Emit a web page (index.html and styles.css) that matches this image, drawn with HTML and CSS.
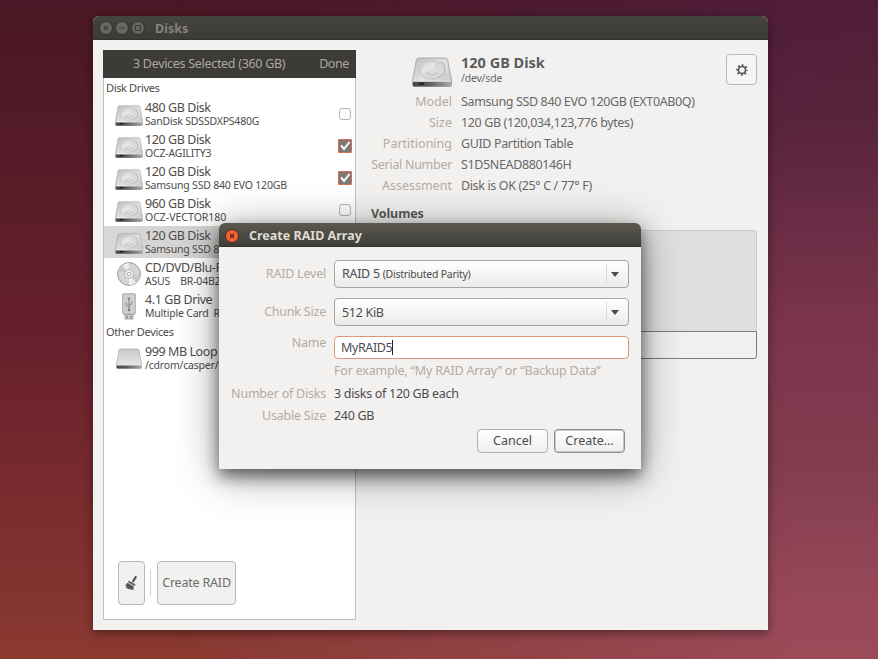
FILE: index.html
```html
<!DOCTYPE html>
<html lang="en">
<head>
    <meta charset="UTF-8">
    <meta name="viewport" content="width=device-width, initial-scale=1.0">
    <title>Disks</title>
    <link rel="stylesheet" href="styles.css">
</head>
<body>
    <svg class="defs" width="0" height="0">
        <defs>
            <linearGradient id="top" x1="0" y1="0" x2="1" y2="1">
                <stop offset="0" stop-color="#bdbdbd"/>
                <stop offset="0.5" stop-color="#e2e2e2"/>
                <stop offset="1" stop-color="#c2c2c2"/>
            </linearGradient>
            <linearGradient id="front" x1="0" y1="0" x2="1" y2="0">
                <stop offset="0" stop-color="#484848"/>
                <stop offset="0.4" stop-color="#595959"/>
                <stop offset="1" stop-color="#a9a9a9"/>
            </linearGradient>
            <linearGradient id="metal" x1="0" y1="0" x2="0" y2="1">
                <stop offset="0" stop-color="#c9c9c9"/>
                <stop offset="1" stop-color="#ededed"/>
            </linearGradient>
        </defs>
        <symbol id="hdd" viewBox="0 0 40 30">
            <path d="M6.500 1h27q1.500 0 2 1.500L39.500 23v5q0 1.500-1.500 1.500H2Q.5 29.500.5 28v-5L4.500 2.500Q5 1 6.500 1z" fill="url(#top)" stroke="#959595" stroke-width=".7"/>
            <path d="M1 24.500h38V28q0 1.500-1.500 1.500h-35Q1 29.500 1 28z" fill="url(#front)"/>
            <path d="M1 24.200h38" stroke="#f2f2f2" stroke-width=".8"/>
            <ellipse cx="20" cy="13" rx="12.500" ry="9" fill="#d9d9d9" stroke="#bcbcbc" stroke-width=".7"/>
            <path d="M9 17Q11 6 24 5L20 13z" fill="#efefef" opacity=".5"/>
            <ellipse cx="20" cy="14.500" rx="5" ry="3" fill="#dadada" stroke="#eee" stroke-width=".7"/>
            <path d="M14.500 14.500q1 3.500 5.500 3.500t5.500-3.500M29 5l3 2 1 10-7 3" fill="none" stroke="#adadad" stroke-width=".8"/>
            <path d="M7 25.800h5v2H7z" fill="#1c1c1c"/>
        </symbol>
        <symbol id="loop" viewBox="0 0 26 22">
            <path d="M4.500 1h17q1.200 0 1.500 1.200L25.500 17v2.500q0 1-1 1h-23q-1 0-1-1V17L3 2.200Q3.300 1 4.500 1z" fill="url(#metal)" stroke="#a8a8a8" stroke-width=".7"/>
            <path d="M.7 17.500h24.600v2q0 1-1 1H1.700q-1 0-1-1z" fill="url(#front)"/>
        </symbol>
        <symbol id="disc" viewBox="0 0 24 24">
            <circle cx="12" cy="12" r="11.400" fill="#d5d5d5" stroke="#8e8e8e" stroke-width=".9"/>
            <path d="M12 12L5 3.500Q8.500.8 12 1zM12 12l7 8.500q-3.500 2.700-7 2.500z" fill="#efefef"/>
            <path d="M12 12L1 9q1-3.500 4-6zM12 12l11 3q-1 3.500-4 6z" fill="#c8c8c8"/>
            <circle cx="12" cy="12" r="4.500" fill="#e9e9e9" stroke="#b3b3b3" stroke-width=".8"/>
            <circle cx="12" cy="12" r="1.700" fill="#fff" stroke="#999" stroke-width=".8"/>
        </symbol>
        <symbol id="usb" viewBox="0 0 14 27">
            <path d="M1.500.7h11q.8 0 .8.800v18.500q0 1.300-1.300 1.300H2Q.7 21.300.7 20V1.500Q.7.700 1.500.700z" fill="#cfcfcf" stroke="#989898" stroke-width=".8"/>
            <path d="M3 21.500h8v4.500H3z" fill="#cdcdcd" stroke="#8e8e8e" stroke-width=".8"/>
            <path d="M4.500 23.200h1.500v1.500H4.500zM8 23.200h1.500v1.500H8z" fill="#777"/>
            <path d="M7 5.500v11M7 14l-2.800-2V9.500M7 12.500l2.800-1.800V8.500" fill="none" stroke="#818181" stroke-width="1"/>
            <path d="M5.600 6.500L7 4l1.400 2.500z" fill="#777"/>
            <circle cx="7" cy="17" r="1.300" fill="#777"/>
        </symbol>
    </svg>

    <div class="window">
        <div class="titlebar">
            <svg class="buttons" width="46" height="14" viewBox="0 0 46 14">
                <g fill="#6a6862" stroke="#33322e">
                    <circle cx="7" cy="7" r="6.400"/>
                    <circle cx="23" cy="7" r="6.400"/>
                    <circle cx="39" cy="7" r="6.400"/>
                </g>
                <path d="M5 5l4 4M9 5l-4 4M20 7h6M36.500 4.500h5v5h-5z" fill="none" stroke="#3b3a36" stroke-width="1.200"/>
            </svg>
            <span class="title">Disks</span>
        </div>
        <div class="content">
            <div class="sidebar">
                <div class="selection">
                    <span class="count">3 Devices Selected (360 GB)</span>
                    <span class="done">Done</span>
                </div>
                <div class="list">
                    <div class="group">Disk Drives</div>
                    <div class="row">
                        <svg class="icon"><use href="#hdd"/></svg>
                        <div class="text"><b>480 GB Disk</b><small>SanDisk SDSSDXPS480G</small></div>
                        <span class="check"></span>
                    </div>
                    <div class="row">
                        <svg class="icon"><use href="#hdd"/></svg>
                        <div class="text"><b>120 GB Disk</b><small>OCZ-AGILITY3</small></div>
                        <span class="check checked"><svg width="12" height="12" viewBox="0 0 12 12"><path d="M2 5.500l3 3.500 5.500-7"/></svg></span>
                    </div>
                    <div class="row">
                        <svg class="icon"><use href="#hdd"/></svg>
                        <div class="text"><b>120 GB Disk</b><small>Samsung SSD 840 EVO 120GB</small></div>
                        <span class="check checked"><svg width="12" height="12" viewBox="0 0 12 12"><path d="M2 5.500l3 3.500 5.500-7"/></svg></span>
                    </div>
                    <div class="row">
                        <svg class="icon"><use href="#hdd"/></svg>
                        <div class="text"><b>960 GB Disk</b><small class="wide">OCZ-VECTOR180</small></div>
                        <span class="check"></span>
                    </div>
                    <div class="row current">
                        <svg class="icon"><use href="#hdd"/></svg>
                        <div class="text"><b>120 GB Disk</b><small>Samsung SSD 840 EVO 120GB</small></div>
                    </div>
                    <div class="row">
                        <svg class="icon disc"><use href="#disc"/></svg>
                        <div class="text"><b>CD/DVD/Blu-R</b><small>ASUS &nbsp;&nbsp; BR-04B2</small></div>
                    </div>
                    <div class="row">
                        <svg class="icon usb"><use href="#usb"/></svg>
                        <div class="text"><b>4.1 GB Drive</b><small>Multiple Card &nbsp;R</small></div>
                    </div>
                    <div class="group">Other Devices</div>
                    <div class="row">
                        <svg class="icon loop"><use href="#loop"/></svg>
                        <div class="text"><b>999 MB Loop</b><small>/cdrom/casper/f</small></div>
                    </div>
                </div>
                <div class="toolbar">
                    <div class="tool brush">
                        <svg width="13" height="16" viewBox="0 0 13 16" fill="#555">
                            <path d="M10.200.8l1.900.9-3.400 5.800-1.900-1z"/>
                            <path d="M3.800 5.800l6.700 3.700-.9 1.500L3 7.300z"/>
                            <path d="M2.300 7.800l6.600 3.700-.7 1.800 1.500 1.200-4 .2-1.500-1.200.3 1.100L.5 12.500l1.500-1-1.800-.8z"/>
                        </svg>
                    </div>
                    <div class="separator"></div>
                    <div class="tool create">Create RAID</div>
                </div>
            </div>

            <div class="details">
                <div class="header">
                    <svg class="big"><use href="#hdd"/></svg>
                    <div class="name"><h1>120 GB Disk</h1><p>/dev/sde</p></div>
                    <div class="gear">
                        <svg width="14" height="14" viewBox="0 0 14 14">
                            <circle cx="7" cy="7" r="3.500" fill="none" stroke="#555" stroke-width="1.600"/>
                            <circle cx="7" cy="7" r="4.900" fill="none" stroke="#555" stroke-width="1.800" stroke-dasharray="1.800 2.049" stroke-dashoffset=".9"/>
                        </svg>
                    </div>
                </div>
                <div class="info">
                    <span class="label">Model</span><span>Samsung SSD 840 EVO 120GB (EXT0AB0Q)</span>
                    <span class="label">Size</span><span>120 GB (120,034,123,776 bytes)</span>
                    <span class="label">Partitioning</span><span>GUID Partition Table</span>
                    <span class="label serial">Serial Number</span><span>S1D5NEAD880146H</span>
                    <span class="label">Assessment</span><span>Disk is OK (25° C / 77° F)</span>
                </div>
                <h2>Volumes</h2>
                <div class="volumes"><div class="volume"></div><div class="volume-bar"></div></div>
            </div>
        </div>
    </div>

    <div class="dialog">
        <div class="titlebar">
            <svg class="close" width="14" height="14" viewBox="0 0 14 14">
                <circle cx="7" cy="7" r="6.500" fill="#ef6238" stroke="#5b2b1b"/>
                <path d="M5 5l4 4M9 5l-4 4" stroke="#5a2412" stroke-width="1.200"/>
            </svg>
            <span class="title">Create RAID Array</span>
        </div>
        <div class="form">
            <span class="label">RAID Level</span>
            <div class="combo"><span>RAID 5 <small>(Distributed Parity)</small></span><i></i></div>
            <span class="label">Chunk Size</span>
            <div class="combo"><span>512 KiB</span><i></i></div>
            <span class="label name-label">Name</span>
            <div class="entry"><span>MyRAID5</span></div>
            <span></span>
            <span class="hint">For example, “My RAID Array” or “Backup Data”</span>
            <span class="label">Number of Disks</span>
            <span>3 disks of 120 GB each</span>
            <span class="label">Usable Size</span>
            <span>240 GB</span>
        </div>
        <div class="actions">
            <div class="btn">Cancel</div>
            <div class="btn default">Create…</div>
        </div>
    </div>
</body>
</html>
```
FILE: styles.css
```css
* {
    box-sizing: border-box;
}
body {
    margin: 0;
    width: 878px;
    height: 659px;
    position: relative;
    z-index: 0;
    overflow: hidden;
    font-family: 'Noto Sans', sans-serif;
    font-size: 12.5px;
    line-height: 16px;
    white-space: nowrap;
    color: #4c4c4c;
    background: linear-gradient(#491725, #65202c 50%, #7a2b2e 76%, #8a3a30);
}
/* wallpaper: the right side fades to purple */
body::before, body::after {
    content: '';
    position: absolute;
    inset: 0;
    z-index: -1;
}
body::before {
    background: linear-gradient(#4d1d36, #5a253b 20%, #6e2f47 38%, #7b354b 50%, #813c50 70%, #974858 91%, #9b4a58);
    -webkit-mask-image: linear-gradient(to right, transparent 20%, #000 90%);
    mask-image: linear-gradient(to right, transparent 20%, #000 90%);
}
body::after {
    background: linear-gradient(to right, rgba(88, 28, 84, 0) 70%, rgba(88, 28, 84, 0.16));
    clip-path: polygon(878px 0, 878px 33px, 740px 170px, 600px 0);
}
.defs {
    position: absolute;
}
h1, h2, p {
    margin: 0;
}
.window {
    position: absolute;
    left: 93px;
    top: 16px;
    width: 675px;
    height: 614px;
    display: flex;
    flex-direction: column;
    border-radius: 6px 6px 0 0;
    overflow: hidden;
    background: #f2f1f0;
    box-shadow: 0 3px 10px rgba(0, 0, 0, 0.4);
}
.titlebar {
    display: flex;
    align-items: center;
    height: 24px;
    flex: none;
    background: linear-gradient(#454440, #3c3b37);
    color: #85837d;
    border-bottom: 1px solid #33322e;
}
.title {
    font-weight: bold;
    font-size: 12.5px;
    padding-top: 2px;
}
.window .buttons {
    margin: 0 10px 0 6px;
}
.content {
    flex: 1;
    display: flex;
    padding: 10px;
}
.sidebar {
    width: 253px;
    display: flex;
    flex-direction: column;
    border: 1px solid #c3c0bc;
    border-top: none;
    background: #fff;
}
.selection {
    height: 28px;
    margin: 0 -1px;
    padding: 0 7px 0 30px;
    display: flex;
    align-items: center;
    justify-content: space-between;
    background: #3c3b37;
    color: #aca89f;
}
.count {
    letter-spacing: -0.3px;
}
.done {
    letter-spacing: -0.4px;
}
.list {
    flex: 1;
}
.group {
    height: 20px;
    padding-left: 2px;
    line-height: 20px;
    font-size: 11px;
    letter-spacing: -0.35px;
}
.row {
    height: 32px;
    display: flex;
    padding: 0 4px 0 12px;
}
.row.current {
    background: linear-gradient(to right, #d9d7d5, #cfcdcb);
}
.icon {
    width: 28px;
    height: 21px;
    margin: 7px 1px 0 -1px;
}
.icon.disc {
    width: 24px;
    height: 24px;
    margin: 4px 3px 0 1px;
}
.icon.usb {
    width: 14px;
    height: 27px;
    margin: 3px 8px 0 6px;
}
.icon.loop {
    width: 26px;
    height: 22px;
    margin: 6px 2px 0 0;
}
.text {
    flex: 1;
    margin-left: 1px;
    padding-top: 3px;
}
.text b, .text small {
    display: block;
    font-weight: normal;
}
.text b {
    line-height: 14px;
    letter-spacing: -0.42px;
}
.text small {
    font-size: 10.5px;
    line-height: 13px;
    letter-spacing: -0.2px;
}
.text small.wide {
    letter-spacing: 0;
}
.check {
    width: 12px;
    height: 12px;
    margin-top: 10px;
    border: 1px solid #b6b3b0;
    border-radius: 3px;
    background: #fdfdfd;
}
.check.checked {
    width: 14px;
    height: 14px;
    margin: 9px -1px 0 0;
    border: 1px solid #d4714f;
    border-radius: 1px;
    background: #7b7876;
}
.check svg {
    display: block;
}
.check path {
    fill: none;
    stroke: #fff;
    stroke-width: 2;
}
.toolbar {
    display: flex;
    align-items: center;
    padding: 0 0 14px 14px;
}
.tool {
    height: 44px;
    display: flex;
    align-items: center;
    justify-content: center;
    border: 1px solid #b9b6b3;
    border-radius: 4px;
    background: #f2f1f0;
    color: #6b6b6b;
}
.brush {
    width: 27px;
}
.create {
    width: 79px;
    letter-spacing: -0.2px;
}
.separator {
    width: 1px;
    height: 26px;
    margin: 0 6px 0 5px;
    background: #d5d2cf;
}
.details {
    flex: 1;
    padding-left: 15px;
    color: #686868;
}
.header {
    display: flex;
    height: 40px;
}
.big {
    width: 40px;
    height: 30px;
    margin: 7px 9px 0 41px;
}
.name {
    flex: 1;
}
.name h1 {
    margin-top: 4px;
    font-size: 14.5px;
    line-height: 17px;
    color: #5c5c5c;
}
.name p {
    font-size: 10.5px;
    line-height: 14px;
    letter-spacing: -0.2px;
}
.gear {
    width: 31px;
    height: 31px;
    margin: 4px 1px 0 0;
    display: flex;
    align-items: center;
    justify-content: center;
    border: 1px solid #b9b6b3;
    border-radius: 4px;
    background: #f6f5f4;
}
.info {
    display: grid;
    grid-template-columns: 81px 1fr;
    column-gap: 9px;
    grid-auto-rows: 21px;
    padding-top: 1px;
    line-height: 21px;
    letter-spacing: -0.37px;
}
.label {
    text-align: right;
    color: #b5aba1;
    letter-spacing: 0;
}
.label.serial {
    letter-spacing: -0.3px;
}
h2 {
    margin: 9px 0 7px;
    font-size: 12.5px;
    line-height: 18px;
    letter-spacing: -0.1px;
    color: #5c5c5c;
}
.volumes {
    width: 386px;
}
.volume {
    height: 101px;
    border: 1px solid #cdcbc9;
    border-bottom: none;
    border-radius: 3px 3px 0 0;
    background: #e1e0df;
}
.volume-bar {
    height: 28px;
    border: 1px solid #7c7b79;
    border-radius: 0 0 3px 3px;
}
.dialog {
    position: absolute;
    left: 219px;
    top: 223px;
    width: 422px;
    height: 246px;
    border-radius: 6px 6px 0 0;
    background: #f2f1f0;
    box-shadow: 0 7px 16px rgba(0, 0, 0, 0.55), 0 6px 44px rgba(0, 0, 0, 0.38);
}
.dialog .titlebar {
    border-radius: 6px 6px 0 0;
    background: linear-gradient(#5a584f, #3f3e39);
    color: #dfdbd2;
}
.close {
    margin: 2px 10px 0 6px;
}
.form {
    display: grid;
    grid-template-columns: 95px 295px;
    grid-template-rows: 38px 38px 23px 23px 22px 23px;
    column-gap: 8px;
    padding: 13px 12px 0;
    line-height: 23px;
    letter-spacing: -0.3px;
}
.form .label {
    line-height: 28px;
    letter-spacing: -0.22px;
}
.form .name-label, .form .name-label ~ .label {
    line-height: 23px;
}
.form .name-label {
    line-height: 14px;
}
.combo, .entry {
    display: flex;
    align-items: center;
    border: 1px solid #a9a6a2;
    border-radius: 4px;
}
.combo {
    height: 28px;
    justify-content: space-between;
    padding: 0 9px 0 7px;
    background: linear-gradient(#fff, #ecebea);
}
.combo small {
    font-size: 10.5px;
    letter-spacing: -0.25px;
}
.combo i {
    width: 13px;
    height: 20px;
    border-left: 1px solid #dcdad8;
    display: flex;
    align-items: center;
    justify-content: flex-end;
}
.combo i::after {
    content: '';
    border: 4px solid transparent;
    border-top: 5px solid #4c4c4c;
    border-bottom: none;
}
.entry {
    height: 23px;
    padding-left: 6px;
    border-color: #e0987c;
    background: #fff;
}
.entry span {
    border-right: 1px solid #222;
    line-height: 15px;
    letter-spacing: -0.4px;
}
.hint {
    color: #b5aba1;
    letter-spacing: -0.2px;
}
.actions {
    display: flex;
    justify-content: flex-end;
    gap: 6px;
    padding: 2px 16px 0;
}
.btn {
    width: 71px;
    height: 24px;
    display: flex;
    align-items: center;
    justify-content: center;
    border: 1px solid #b3b0ad;
    border-radius: 4px;
    background: linear-gradient(#fff, #efeeed);
}
.btn.default {
    border-color: #908e8b;
    box-shadow: inset 0 0 0 1px #c9c7c4;
}
```
